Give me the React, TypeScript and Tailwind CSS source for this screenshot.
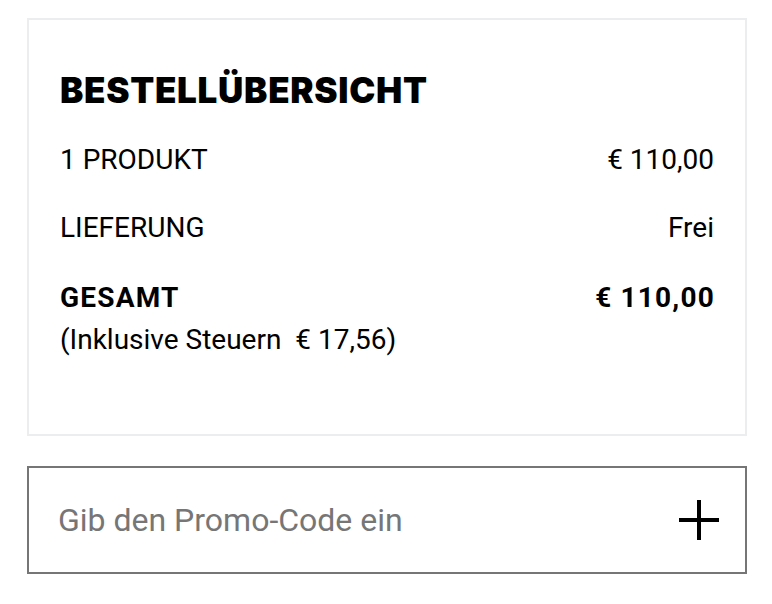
import React from 'react';

interface SummaryRow {
  label: string;
  value: string;
}

const rows: SummaryRow[] = [
  { label: "1 PRODUKT", value: "€ 110,00" },
  { label: "LIEFERUNG", value: "Frei" },
];

const PlusIcon = () => (
  <svg width="40" height="40" viewBox="0 0 40 40" fill="none">
    <path d="M20 0v40M0 20h40" stroke="#000" strokeWidth="4" />
  </svg>
);

const App = () => {
  return (
    <div className="min-h-screen bg-white pl-[27px] pt-[18px] font-['Roboto',sans-serif] text-black">
      <div className="w-[720px]">
        <section className="border-2 border-[#ebedee] px-[31px] pt-[49px] pb-[78px]">
          <h2 className="font-['Inter',sans-serif] text-[35px] leading-[42px] font-black uppercase tracking-[0.7px]">
            Bestellübersicht
          </h2>

          <div className="mt-[33px] flex flex-col gap-[36px]">
            {rows.map((row) => (
              <div key={row.label} className="flex justify-between text-[28px] leading-[32px]">
                <span>{row.label}</span>
                <span>{row.value}</span>
              </div>
            ))}
          </div>

          <div className="mt-[38px] text-[28px] leading-[32px]">
            <div className="flex justify-between font-bold tracking-[1.2px]">
              <span>GESAMT</span>
              <span className="-mr-[1px]">€ 110,00</span>
            </div>
            <div className="mt-[10px]">(Inklusive Steuern&nbsp; € 17,56)</div>
          </div>
        </section>

        <div className="mt-[30px] h-[108px] border-2 border-[#767677] flex items-center justify-between pl-[29px] pr-[26px]">
          <span className="text-[32px] leading-[36px] text-[#767677]">Gib den Promo-Code ein</span>
          <PlusIcon />
        </div>
      </div>
    </div>
  );
};

export default App;
